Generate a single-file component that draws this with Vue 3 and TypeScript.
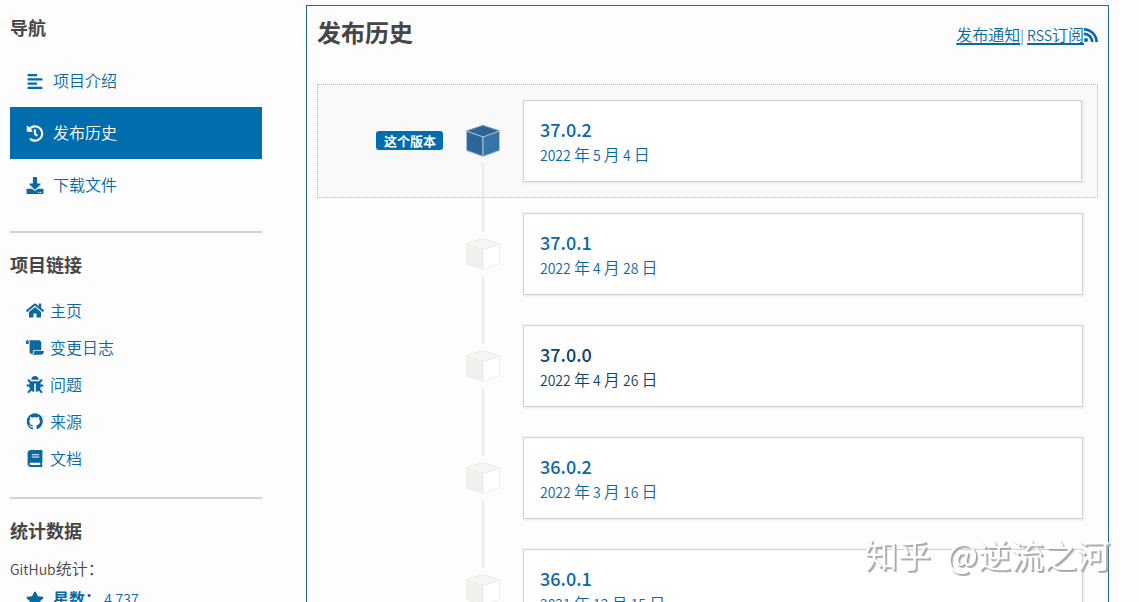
<script setup lang="ts">
interface Release { version: string; date: [string, string][]; current?: boolean; hovered?: boolean }
interface Link { icon: string; box: string; label: string }

const nav: Link[] = [
  { icon: 'M12.83 352h262.34A12.82 12.82 0 0 0 288 339.17v-38.34A12.82 12.82 0 0 0 275.17 288H12.83A12.82 12.82 0 0 0 0 300.83v38.34A12.82 12.82 0 0 0 12.83 352zm0-256h262.34A12.82 12.82 0 0 0 288 83.17V44.83A12.82 12.82 0 0 0 275.17 32H12.83A12.82 12.82 0 0 0 0 44.83v38.34A12.82 12.82 0 0 0 12.83 96zM432 160H16a16 16 0 0 0-16 16v32a16 16 0 0 0 16 16h416a16 16 0 0 0 16-16v-32a16 16 0 0 0-16-16zm0 256H16a16 16 0 0 0-16 16v32a16 16 0 0 0 16 16h416a16 16 0 0 0 16-16v-32a16 16 0 0 0-16-16z', box: '0 0 448 512', label: '项目介绍' },
  { icon: 'M504 255.531c.253 136.64-111.18 248.372-247.82 248.468-59.015.042-113.223-20.53-155.822-54.911-11.077-8.94-11.905-25.541-1.839-35.607l11.267-11.267c8.609-8.609 22.353-9.551 31.891-1.984C173.062 425.135 212.781 440 256 440c101.705 0 184-82.311 184-184 0-101.705-82.311-184-184-184-48.814 0-93.149 18.969-126.068 49.932l50.754 50.754c10.08 10.08 2.941 27.314-11.313 27.314H24c-8.837 0-16-7.163-16-16V38.627c0-14.254 17.234-21.393 27.314-11.314l49.372 49.372C129.209 34.136 189.552 8 256 8c136.81 0 247.747 110.78 248 247.531zm-180.912 78.784l9.823-12.63c8.138-10.463 6.253-25.542-4.21-33.679L288 256.349V152c0-13.255-10.745-24-24-24h-16c-13.255 0-24 10.745-24 24v135.651l65.409 50.874c10.463 8.137 25.541 6.253 33.679-4.21z', box: '0 0 512 512', label: '发布历史' },
  { icon: 'M216 0h80c13.3 0 24 10.7 24 24v168h87.7c17.8 0 26.7 21.5 14.1 34.1L269.7 378.3c-7.5 7.5-19.8 7.5-27.3 0L90.1 226.1c-12.6-12.6-3.7-34.1 14.1-34.1H192V24c0-13.3 10.7-24 24-24zm296 376v112c0 13.3-10.7 24-24 24H24c-13.3 0-24-10.7-24-24V376c0-13.3 10.7-24 24-24h146.7l49 49c20.1 20.1 52.5 20.1 72.6 0l49-49H488c13.3 0 24 10.7 24 24zm-124 88c0-11-9-20-20-20s-20 9-20 20 9 20 20 20 20-9 20-20zm64 0c0-11-9-20-20-20s-20 9-20 20 9 20 20 20 20-9 20-20z', box: '0 0 512 512', label: '下载文件' },
]
const activeNav = '发布历史'

const links: Link[] = [
  { icon: 'M280.37 148.26L96 300.11V464a16 16 0 0 0 16 16l112.06-.29a16 16 0 0 0 15.92-16V368a16 16 0 0 1 16-16h64a16 16 0 0 1 16 16v95.64a16 16 0 0 0 16 16.05L464 480a16 16 0 0 0 16-16V300L295.67 148.26a12.19 12.19 0 0 0-15.3 0zM571.6 251.47L488 182.56V44.05a12 12 0 0 0-12-12h-56a12 12 0 0 0-12 12v72.61L318.47 43a48 48 0 0 0-61 0L4.34 251.47a12 12 0 0 0-1.6 16.9l25.5 31A12 12 0 0 0 45.15 301l235.22-193.74a12.19 12.19 0 0 1 15.3 0L530.9 301a12 12 0 0 0 16.9-1.6l25.5-31a12 12 0 0 0-1.7-16.93z', box: '0 0 576 512', label: '主页' },
  { icon: 'M48 0C21.53 0 0 21.53 0 48v64c0 8.84 7.16 16 16 16h80V48C96 21.53 74.47 0 48 0zm208 412.57V352h288V96c0-52.94-43.06-96-96-96H111.59C121.74 13.41 128 29.92 128 48v368c0 38.87 34.65 69.65 74.75 63.12C234.22 474 256 444.46 256 412.57zM288 384v32c0 52.93-43.06 96-96 96h336c61.86 0 112-50.14 112-112 0-8.84-7.16-16-16-16H288z', box: '0 0 640 512', label: '变更日志' },
  { icon: 'M511.988 288.9c-.478 17.43-15.217 31.1-32.653 31.1H424v16c0 21.864-4.882 42.584-13.6 61.145l60.228 60.228c12.496 12.497 12.496 32.758 0 45.255-12.498 12.497-32.759 12.496-45.256 0l-54.736-54.736C345.886 467.965 314.351 480 280 480V236c0-6.627-5.373-12-12-12h-24c-6.627 0-12 5.373-12 12v244c-34.351 0-65.886-12.035-90.636-32.108l-54.736 54.736c-12.498 12.497-32.759 12.496-45.256 0-12.496-12.497-12.496-32.758 0-45.255l60.228-60.228C92.882 378.584 88 357.864 88 336v-16H32.666C15.23 320 .491 306.33.013 288.9-.484 270.816 14.028 256 32 256h56v-58.745l-46.628-46.628c-12.496-12.497-12.496-32.758 0-45.255 12.498-12.497 32.758-12.497 45.256 0L141.255 160h229.489l54.627-54.627c12.498-12.497 32.758-12.497 45.256 0 12.496 12.497 12.496 32.758 0 45.255L424 197.255V256h56c17.972 0 32.484 14.816 31.988 32.9zM257 0c-61.856 0-112 50.144-112 112h224C369 50.144 318.856 0 257 0z', box: '0 0 512 512', label: '问题' },
  { icon: 'M256 8C119 8 8 119 8 256c0 109 70 202 167 236 14 3 18-6 18-13v-49c-70 15-85-29-86-31-11-28-27-36-27-36-22-15 2-15 2-15 25 2 38 25 38 25 22 38 58 27 72 21l10-25c-56-7-115-28-115-122 0-27 10-49 25-66-3-7-11-32 3-66 0 0 20-7 68 25 40-11 84-11 124 0 48-32 68-25 68-25 14 34 6 59 3 66 15 17 25 39 25 66 0 95-59 115-115 122 9 8 17 22 17 46v60c0 7 5 16 18 13 97-34 167-127 167-236C504 119 393 8 256 8z', box: '0 0 512 512', label: '来源' },
  { icon: 'M448 360V24c0-13.3-10.7-24-24-24H96C43 0 0 43 0 96v320c0 53 43 96 96 96h328c13.3 0 24-10.7 24-24v-16c0-7.5-3.5-14.3-8.9-18.7-4.2-15.4-4.2-59.3 0-74.7 5.4-4.3 8.9-11.1 8.9-18.6zM128 134c0-3.3 2.7-6 6-6h212c3.3 0 6 2.7 6 6v20c0 3.3-2.7 6-6 6H134c-3.3 0-6-2.7-6-6v-20zm0 64c0-3.3 2.7-6 6-6h212c3.3 0 6 2.7 6 6v20c0 3.3-2.7 6-6 6H134c-3.3 0-6-2.7-6-6v-20zm253.4 250H96c-17.7 0-32-14.3-32-32 0-17.6 14.4-32 32-32h285.4c-1.9 17.1-1.9 46.9 0 64z', box: '0 0 448 512', label: '文档' },
]

const releases: Release[] = [
  { version: '37.0.2', date: [['2022', '年'], ['5', '月'], ['4', '日']], current: true },
  { version: '37.0.1', date: [['2022', '年'], ['4', '月'], ['28', '日']] },
  { version: '37.0.0', date: [['2022', '年'], ['4', '月'], ['26', '日']], hovered: true },
  { version: '36.0.2', date: [['2022', '年'], ['3', '月'], ['16', '日']] },
  { version: '36.0.1', date: [['2021', '年'], ['12', '月'], ['15', '日']] },
]
</script>

<template>
  <div class="page">
    <aside class="sidebar">
      <section>
        <h2>导航</h2>
        <nav class="tabs">
          <a v-for="n in nav" :key="n.label" href="#" :class="{ active: n.label === activeNav }">
            <svg class="icon" :viewBox="n.box"><path :d="n.icon" /></svg>{{ n.label }}
          </a>
        </nav>
      </section>
      <section class="links-section">
        <h2>项目链接</h2>
        <ul class="links">
          <li v-for="l in links" :key="l.label">
            <a href="#"><svg class="icon" :viewBox="l.box"><path :d="l.icon" /></svg>{{ l.label }}</a>
          </li>
        </ul>
      </section>
      <section class="stats-section">
        <h2>统计数据</h2>
        <p><span class="latin">GitHub</span>统计：</p>
        <a class="stat" href="#">
          <svg class="icon" viewBox="0 0 576 512"><path d="M259.3 17.8L194 150.2 47.900 171.500c-26.200 3.800-36.700 36.100-17.700 54.600l105.700 103-25 145.500c-4.500 26.300 23.200 46 46.400 33.700L288 439.600l130.700 68.700c23.200 12.200 50.900-7.400 46.400-33.700l-25-145.500 105.700-103c19-18.500 8.500-50.800-17.700-54.600L382 150.200 316.700 17.800c-11.700-23.600-45.600-23.900-57.400 0z" /></svg>
          <span><strong>星数：</strong><span class="latin"> 4,737</span></span>
        </a>
      </section>
    </aside>

    <main class="content">
      <header class="heading">
        <h1>发布历史</h1>
        <div class="feeds">
          <a href="#">发布通知</a><span class="latin">| </span><a href="#"><span class="latin">RSS</span>订阅<svg class="rss" viewBox="0 0 448 448"><circle cx="64" cy="384" r="64" /><path d="M0 140v88c122 3 217 98 220 220h88C305 278 170 143 0 140zM0 0v88c200 3 357 160 360 360h88C444 204 244 4 0 0z" /></svg></a>
        </div>
      </header>
      <div class="timeline">
        <div v-for="r in releases" :key="r.version" class="release" :class="{ current: r.current }">
          <div class="meta"><span v-if="r.current" class="badge">这个版本</span></div>
          <div class="node">
            <i class="line" />
            <svg class="cube" viewBox="0 0 34 32">
              <path class="top" d="M17 .5 33.500 6 17 12 .5 6z" />
              <path class="left" d="M.5 6 17 12v19.500L.5 25.500z" />
              <path class="right" d="M33.500 6 17 12v19.500l16.500-6z" />
            </svg>
            <i class="line" />
          </div>
          <a class="card" :class="{ hovered: r.hovered }" href="#">
            <span class="version">{{ r.version }}</span>
            <span class="date"><template v-for="(d, i) in r.date" :key="i"><span class="latin">{{ (i ? ' ' : '') + d[0] + ' ' }}</span>{{ d[1] }}</template></span>
          </a>
        </div>
      </div>
    </main>
    <div class="watermark"><span>知乎</span> <span>@逆流之河</span></div>
  </div>
</template>

<style>
body { margin: 0; background: #fdfdfd; overflow: hidden; }
</style>

<style scoped>
.page {
  display: grid;
  grid-template-columns: 252px minmax(0, 1fr);
  column-gap: 44px;
  padding: 5px 30px 0 10px;
  box-sizing: border-box;
  height: 100vh;
  overflow: hidden;
  color: #464646;
  font: 350 16px/24px "Noto Sans CJK SC", "Noto Sans", sans-serif;
}
a { color: #0a68a2; text-decoration: none; }
.latin { font-size: 14px; white-space: pre; }
h1, h2, p, ul { margin: 0; padding: 0; }
h1 { font-size: 24px; line-height: 36px; font-weight: 700; }
h2 { font-size: 18px; line-height: 24px; font-weight: 700; }
.icon { width: 18px; height: 17px; margin-top: 2px; fill: currentColor; flex: none; }

.sidebar h2 { padding-top: 10px; }
.tabs { padding-top: 16px; }
.tabs a {
  display: flex;
  align-items: center;
  gap: 9px;
  height: 50px;
  padding: 0 16px 2px;
}
.tabs .active { background: #006dad; color: #fff; }
.links-section, .stats-section { border-top: 2px solid #d3d3d3; }
.links-section { margin-top: 20px; padding-top: 9px; }
.links { padding: 15px 16px 0; list-style: none; }
.links a { display: flex; align-items: center; gap: 6px; height: 37px; }
.stats-section { margin-top: 21px; padding-top: 9px; }
.stats-section p { padding-top: 14px; }
.stat { display: flex; align-items: center; gap: 9px; padding: 5px 16px 0; }
.stat strong { font-weight: 700; }

.content {
  border: 1px solid #1f6a88;
  border-bottom: 0;
  padding: 8px 10px 0;
}
.heading { display: flex; justify-content: space-between; align-items: flex-start; height: 70px; }
.feeds { padding-top: 8px; color: #6b8aa0; }
.feeds a { text-decoration: underline; text-decoration-thickness: 2px; text-underline-offset: 2px; }
.rss { width: 14px; height: 14px; fill: currentColor; vertical-align: -1px; }

.release {
  display: grid;
  grid-template-columns: 111px 80px minmax(0, 1fr);
  padding: 0 15px;
}
.current { border: 1px dotted #bbb; background: #f9f9f9; padding-left: 14px; }
.meta { display: flex; align-items: center; justify-content: flex-end; padding-bottom: 2px; }
.badge {
  padding: 0 7px 0 8px;
  border-radius: 3px;
  background: #006dad;
  color: #fff;
  font-size: 13px;
  line-height: 19px;
  font-weight: 700;
}
.node { display: flex; flex-direction: column; align-items: center; gap: 6px; }
.line { flex: 1; width: 2px; background: #ebebeb; }
.current .line:first-child { background: transparent; }
.cube { width: 34px; height: 32px; stroke: #ecebe8; stroke-width: 1; stroke-linejoin: round; }
.cube .top { fill: #f5f5f2; }
.cube .left { fill: #f0f0ed; }
.cube .right { fill: #fff; }
.current .cube { stroke: #a9c4da; }
.current .top { fill: #2b6594; stroke: #5f8db3; }
.current .left { fill: #2d679a; }
.current .right { fill: #3775a9; }
.card {
  display: flex;
  flex-direction: column;
  margin: 15px 0;
  height: 82px;
  box-sizing: border-box;
  padding: 16px;
  border: 1px solid #d0d0d0;
  background: #fff;
  box-shadow: 1px 1px 2px 1px rgba(0, 0, 0, .05);
}
.card.hovered { color: #0b4468; }
.version { font-size: 18px; line-height: 25px; font-weight: 500; }
.date { line-height: 25px; }

.watermark {
  position: fixed;
  right: 29px;
  bottom: 24px;
  display: flex;
  gap: 16px;
  color: #fff;
  font-size: 33px;
  line-height: 48px;
  font-weight: 400;
  text-shadow: 1px 1px 0 #a6a6a6, 2px 2px 0 #b4b4b4;
  pointer-events: none;
}
</style>
